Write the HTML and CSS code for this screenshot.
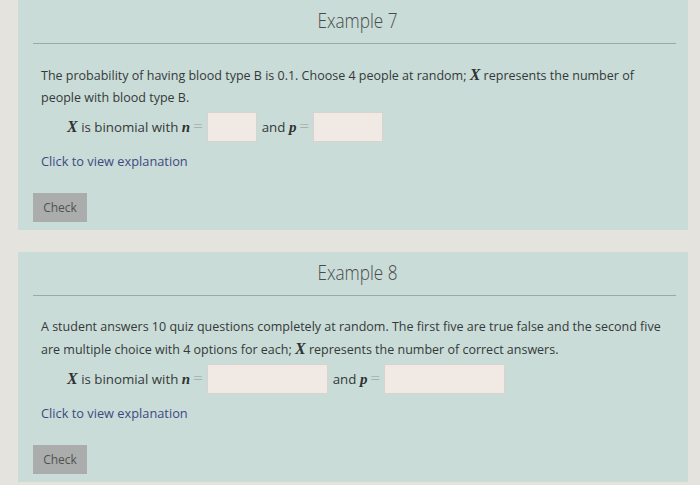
FILE: index.html
```html
<!DOCTYPE html>
<html>
<head>
<meta charset="utf-8">
<link rel="stylesheet" href="styles.css">
</head>
<body>
<div class="page">
  <section class="panel">
    <h2 class="title">Example 7</h2>
    <hr class="rule">
    <p class="question">The probability of having blood type B is 0.1. Choose 4 people at random; <span class="mvar">X</span> represents the number of people with blood type B.</p>
    <div class="formula">
      <span class="mvar">X</span><span class="txt">&nbsp;is binomial with&nbsp;</span><span class="mvar small">n</span><span class="eq">=</span>
      <span class="box box-a"></span>
      <span class="txt">and&nbsp;</span><span class="mvar small">p</span><span class="eq">=</span>
      <span class="box box-b"></span>
    </div>
    <a class="explain">Click to view explanation</a>
    <div class="actions"><button class="check">Check</button></div>
  </section>
  <section class="panel">
    <h2 class="title">Example 8</h2>
    <hr class="rule">
    <p class="question">A student answers 10 quiz questions completely at random. The first five are true false and the second five are multiple choice with 4 options for each; <span class="mvar">X</span> represents the number of correct answers.</p>
    <div class="formula">
      <span class="mvar">X</span><span class="txt">&nbsp;is binomial with&nbsp;</span><span class="mvar small">n</span><span class="eq">=</span>
      <span class="box box-c"></span>
      <span class="txt">and&nbsp;</span><span class="mvar small">p</span><span class="eq">=</span>
      <span class="box box-c"></span>
    </div>
    <a class="explain">Click to view explanation</a>
    <div class="actions"><button class="check">Check</button></div>
  </section>
</div>
</body>
</html>
```

FILE: styles.css
```css
html, body {
  margin: 0;
  padding: 0;
  background: #e5e3dd;
}
body {
  font-family: "Open Sans", "Noto Sans", sans-serif;
  color: #353939;
}
.page {
  display: flex;
  flex-direction: column;
  gap: 22px;
  padding: 0 12px 0 18px;
}
.panel {
  background: #c9dcd8;
  height: 230px;
  box-sizing: border-box;
  padding: 8px 12px 0 15px;
  display: flex;
  flex-direction: column;
  align-items: flex-start;
}
.title {
  align-self: stretch;
  margin: 0;
  text-align: center;
  font-size: 19.5px;
  line-height: 26px;
  font-weight: 300;
  color: #474b4b;
  transform: translateX(3px) scaleX(0.88);
}
.rule {
  align-self: stretch;
  margin: 9px 0 0 0;
  border: 0;
  height: 1px;
  background: #9ea7a5;
}
.question {
  margin: 20px 0 0 8px;
  font-size: 12.5px;
  line-height: 22px;
  max-width: 630px;
}
.formula {
  margin: 3px 0 0 34px;
  display: flex;
  align-items: center;
  font-size: 13.3px;
}
.mvar {
  font-family: "Liberation Serif", "DejaVu Serif", serif;
  font-style: italic;
  font-weight: bold;
  font-size: 16px;
  color: #2e3232;
}
.mvar.small {
  font-size: 15px;
}
.eq {
  font-family: "Liberation Serif", serif;
  font-size: 17px;
  color: #a9b0ae;
  margin: 0 4px 0 3px;
}
.box {
  display: inline-block;
  height: 30px;
  box-sizing: border-box;
  background: #f1e9e4;
  border: 1px solid #d9d3cf;
  margin-right: 5px;
}
.box-a { width: 50px; }
.box-b { width: 70px; }
.box-c { width: 121px; }
.explain {
  margin: 9px 0 0 8px;
  font-size: 12.8px;
  line-height: 20px;
  color: #3d4a82;
}
.actions {
  margin-top: 22px;
}
.check {
  width: 54px;
  height: 29px;
  border: 0;
  background: #aaadab;
  color: #4f5352;
  font-family: "Open Sans", sans-serif;
  font-size: 12px;
  padding: 0;
}
```
